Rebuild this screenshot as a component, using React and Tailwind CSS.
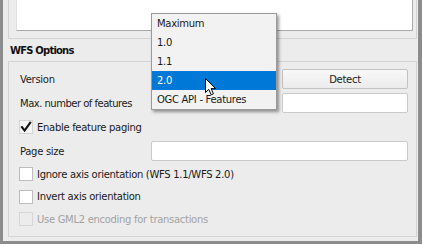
const font = { fontFamily: '"DejaVu Sans", Verdana, sans-serif' };

const Checkbox = ({ checked, disabled }) => (
  <div
    className={`w-[14px] h-[14px] border flex items-center justify-center shrink-0 ${
      disabled ? 'bg-[#ececec] border-[#d6d6d6]' : checked ? 'bg-[#f4f4f4] border-[#d4d4d4]' : 'bg-white border-[#bdbdbd]'
    }`}
  >
    {checked && (
      <svg width="12" height="12" viewBox="0 0 12 12">
        <path d="M2 6.2 L4.6 9.6 L10.2 1.8" fill="none" stroke="#111" strokeWidth="2.1" strokeLinecap="square" />
      </svg>
    )}
  </div>
);

const CheckRow = ({ label, checked, disabled, h = 'h-[22px]' }) => (
  <div className={`flex items-center ${h} pl-[10px] gap-[4px]`}>
    <Checkbox checked={checked} disabled={disabled} />
    <span className={disabled ? 'text-[#a2a2a2]' : 'text-[#1a1a1a]'}>{label}</span>
  </div>
);

const Popup = () => {
  const items = ['Maximum', '1.0', '1.1', '2.0', 'OGC API - Features'];
  return (
    <div className="absolute left-[151px] top-[13px] w-[126px] h-[97px] bg-[#f2f2f2] border border-[#9a9a9a] shadow-[2px_2px_3px_rgba(0,0,0,0.4)]">
      {items.map((it) => (
        <div
          key={it}
          className={`h-[19px] flex items-center pl-[5px] ${it === '2.0' ? 'bg-[#0078d7] text-white' : 'text-[#1a1a1a]'}`}
        >
          {it}
        </div>
      ))}
    </div>
  );
};

const Cursor = () => (
  <svg className="absolute left-[205px] top-[78px]" width="12" height="18" viewBox="0 0 12 18">
    <path
      d="M0.5 0.5 L0.5 14.5 L3.8 11.4 L6.2 16.8 L8.4 15.8 L6.1 10.6 L10.5 10.6 Z"
      fill="#fff"
      stroke="#000"
      strokeWidth="1"
      strokeLinejoin="round"
    />
  </svg>
);

export default function App() {
  return (
    <div
      className="relative w-[422px] h-[244px] overflow-hidden bg-[#8c8c8c] pl-[3px] pr-[4px] pb-[3px] text-[10px] tracking-[-0.3px]"
      style={font}
    >
      <div className="h-full bg-[#ececec] flex flex-col pl-[5px] pr-[1px]">
        {/* previous group (cut off at top) */}
        <div className="border-x border-b border-[#d3d3d3] pl-[7px] pr-[3px] pb-[7px]">
          <div className="h-[31px] bg-white border-l border-[#dedede] border-r border-b border-r-[#a9a9a9] border-b-[#a9a9a9]" />
        </div>

        <div className="h-[22px] flex items-center pl-[2px] font-bold text-[#111] tracking-[-0.8px]">WFS Options</div>

        <div className="h-[176px] border border-[#d3d3d3] flex flex-col pr-[8px]">
          <div className="mt-[7px] h-[20px] flex items-center justify-between pl-[11px]">
            <span className="text-[#1a1a1a]">Version</span>
            <button className="w-[126px] h-[20px] rounded-[2px] border border-[#c2c2c2] bg-gradient-to-b from-[#f8f8f8] to-[#ebebeb] text-[#1a1a1a] flex items-center justify-center">
              Detect
            </button>
          </div>
          <div className="mt-[4px] h-[20px] flex items-center justify-between pl-[11px]">
            <span className="text-[#1a1a1a] tracking-[-0.5px]">Max. number of features</span>
            <div className="w-[126px] h-[20px] rounded-[2px] border border-[#cacaca] bg-white" />
          </div>
          <div className="mt-[3px]">
            <CheckRow label="Enable feature paging" checked />
          </div>
          <div className="mt-[3px] h-[20px] flex items-center justify-between pl-[11px]">
            <span className="text-[#1a1a1a]">Page size</span>
            <div className="w-[257px] h-[20px] rounded-[2px] border border-[#cacaca] bg-white" />
          </div>
          <div className="mt-[2px]">
            <CheckRow label="Ignore axis orientation (WFS 1.1/WFS 2.0)" />
            <CheckRow label="Invert axis orientation" h="h-[23px]" />
            <CheckRow label="Use GML2 encoding for transactions" disabled />
          </div>
        </div>
      </div>

      <Popup />
      <Cursor />
    </div>
  );
}
